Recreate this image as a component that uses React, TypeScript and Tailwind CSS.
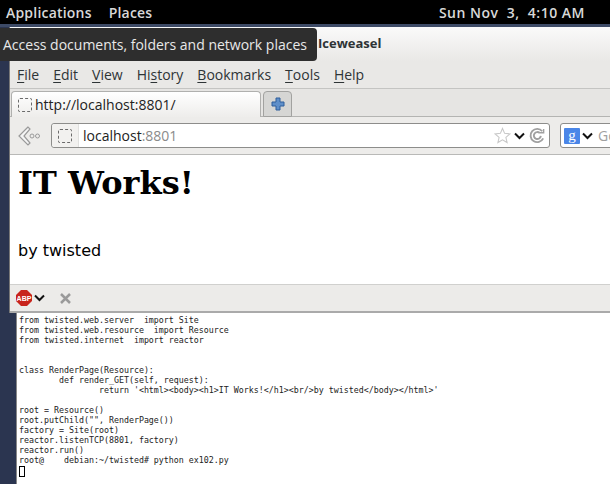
import React from "react";

const ui = "font-['Open_Sans','Noto_Sans',sans-serif]";

const termLines = [
  "from twisted.web.server  import Site",
  "from twisted.web.resource  import Resource",
  "from twisted.internet  import reactor",
  "",
  "",
  "class RenderPage(Resource):",
  "        def render_GET(self, request):",
  "                return '<html><body><h1>IT Works!</h1><br/>by twisted</body></html>'",
  "",
  "root = Resource()",
  'root.putChild("", RenderPage())',
  "factory = Site(root)",
  "reactor.listenTCP(8801, factory)",
  "reactor.run()",
  "root@    debian:~/twisted# python ex102.py",
];

const Favicon = ({ className }: { className: string }) => (
  <div className={`${className} shrink-0 rounded-[2px] border border-dashed border-[#6b6b6b]`} />
);

const Menu = ({ first, rest }: { first: string; rest: string }) => (
  <span>
    <span className="underline underline-offset-2">{first}</span>
    {rest}
  </span>
);

const App: React.FC = () => {
  return (
    <div className={`w-[610px] h-[484px] overflow-hidden flex flex-col bg-[#2b3550] relative ${ui}`}>
      {/* gnome panel */}
      <div className="h-6 shrink-0 bg-black text-[#d8d8d8] text-[14px] font-semibold flex items-center pl-[6px] tracking-[0.2px]">
        <span>Applications</span>
        <span className="ml-[17px]">Places</span>
        <span className="ml-auto mr-[25px] whitespace-pre tracking-[0.5px]">Sun Nov  3,  4:10 AM</span>
      </div>
      <div className="h-[3px] shrink-0 bg-[#3d4a66]" />

      {/* browser */}
      <div className="ml-[9px] shrink-0 flex flex-col border-l border-[#777] bg-[#e8e7e5]">
        <div className="h-[34px] flex items-center bg-gradient-to-b from-[#fafafa] to-[#e9e8e6] pl-[308px] pr-2 text-[13px] font-bold text-[#2e3436]">
          Iceweasel
        </div>
        <div className="h-[28px] flex items-center gap-[14px] pl-[7px] text-[14px] text-[#2e3436] border-b border-[#c4c4c2] bg-[#e9e8e6]">
          <Menu first="F" rest="ile" />
          <Menu first="E" rest="dit" />
          <Menu first="V" rest="iew" />
          <span>
            Hi<span className="underline underline-offset-2">s</span>tory
          </span>
          <Menu first="B" rest="ookmarks" />
          <Menu first="T" rest="ools" />
          <Menu first="H" rest="elp" />
        </div>
        {/* tabs */}
        <div className="h-[28px] flex items-end pl-[1px] border-b border-[#b4b4b2] bg-[#e6e5e3]">
          <div className="h-[26px] w-[250px] -mb-px flex items-center gap-[3px] pl-[6px] rounded-t-[4px] border border-b-0 border-[#b0b0ae] bg-gradient-to-b from-white to-[#eeedeb] text-[14px] text-[#222]">
            <Favicon className="w-[14px] h-[14px]" />
            http://localhost:8801/
          </div>
          <div className="h-[26px] w-[29px] ml-[2px] -mb-px flex items-center justify-center rounded-t-[4px] border border-[#a2a2a0] bg-[#d6d6d4]">
            <svg width="14" height="14" viewBox="0 0 14 14">
              <path d="M5 1h4v4h4v4H9v4H5V9H1V5h4z" fill="#5f8fc9" stroke="#2f5f9c" strokeWidth="1" />
            </svg>
          </div>
        </div>
        {/* nav bar */}
        <div className="h-[38px] flex items-center pl-[7px] border-b border-[#b9b9b7] bg-[#edecea]">
          <svg width="24" height="24" viewBox="0 0 24 24" className="shrink-0" fill="none">
            <path d="M11 3 2 12l9 9 2-2-6-7 6-7z" fill="#f5f5f5" stroke="#9a9a9a" strokeWidth="1.2" />
            <circle cx="15" cy="12" r="2" stroke="#9a9a9a" />
            <circle cx="20.5" cy="12" r="2" stroke="#9a9a9a" />
          </svg>
          <div className="ml-[10px] h-[25px] flex-1 flex items-center rounded-[3px] border border-[#8d8d8b] bg-white min-w-0">
            <div className="h-full w-[27px] flex items-center justify-center bg-[#f2f1ef] border-r border-[#e0e0de] rounded-l-[3px]">
              <Favicon className="w-[14px] h-[14px]" />
            </div>
            <span className="ml-[4px] text-[14px] text-[#222]">
              localhost<span className="text-[#8a8a8a]">:8801</span>
            </span>
            <svg width="17" height="17" viewBox="0 0 24 24" className="ml-auto" fill="#fff" stroke="#c8c8c8" strokeWidth="1.5">
              <path d="m12 2 3 7 7.500.7-5.700 5 1.700 7.300L12 18.200 5.500 22l1.700-7.300-5.700-5L9 9z" />
            </svg>
            <svg width="11" height="8" viewBox="0 0 11 8" className="ml-[3px]" fill="none" stroke="#111" strokeWidth="2">
              <path d="m1 1.500 4.500 4.500L10 1.500" />
            </svg>
            <svg width="17" height="17" viewBox="0 0 18 18" className="ml-[4px] mr-[3px]" fill="none" stroke="#a0a0a0" strokeWidth="2">
              <path d="M15 12a7 7 0 1 1-1-7.500" />
              <path d="M12.500 9.500a3.700 3.700 0 1 1-1-3" />
              <path d="M15.500 2v4h-4" strokeWidth="1.500" />
            </svg>
          </div>
          <div className="ml-[10px] h-[25px] w-[60px] -mr-[10px] shrink-0 flex items-center pl-[3px] rounded-l-[3px] border border-[#8d8d8b] bg-white overflow-hidden">
            <div className="w-4 h-4 bg-[#4a86e8] rounded-[1px] flex items-center justify-center text-white text-[15px] leading-none font-['Liberation_Serif',serif]">
              g
            </div>
            <svg width="11" height="8" viewBox="0 0 11 8" className="ml-[2px] shrink-0" fill="none" stroke="#111" strokeWidth="2">
              <path d="m1 1.500 4.500 4.500L10 1.500" />
            </svg>
            <span className="ml-[5px] text-[14px] text-[#a0a0a0]">Go</span>
          </div>
        </div>
        {/* page */}
        <div className="h-[129px] bg-white pl-2 text-black">
          <h1 className="pt-[7px] text-[32px] leading-[42px] font-bold font-['DejaVu_Serif',serif]">IT Works!</h1>
          <p className="mt-[37px] text-[16px] leading-5 font-['DejaVu_Sans',sans-serif]">by twisted</p>
        </div>
        {/* addon bar */}
        <div className="h-[29px] flex items-center pl-[6px] border-t border-[#d0d0ce] border-b-2 border-b-[#aaa] bg-[#ecebe9]">
          <svg width="16" height="16" viewBox="0 0 16 16" className="shrink-0">
            <path d="M5 0h6l5 5v6l-5 5H5l-5-5V5z" fill="#c8241c" />
            <text x="8" y="11" textAnchor="middle" fontSize="7" fontWeight="700" fill="#fff" fontFamily="Liberation Sans, sans-serif">ABP</text>
          </svg>
          <svg width="11" height="8" viewBox="0 0 11 8" className="ml-[2px]" fill="none" stroke="#111" strokeWidth="2">
            <path d="m1 1.500 4.500 4.500L10 1.500" />
          </svg>
          <svg width="11" height="11" viewBox="0 0 11 11" className="ml-[15px]" fill="none" stroke="#9a9a9a" strokeWidth="2.500">
            <path d="m1 1 9 9M10 1l-9 9" />
          </svg>
        </div>
      </div>

      {/* terminal */}
      <div className="ml-4 flex-1 min-h-0 bg-white border-l border-[#888] pl-[2px] pt-[2px] text-[#222] text-[8.300px] leading-[10px] font-['DejaVu_Sans_Mono',monospace] whitespace-pre">
        {termLines.map((line, i) => (
          <div key={i} className="h-[10px]">
            {line}
          </div>
        ))}
        <div className="mt-[1px] w-[6px] h-[11px] border border-black" />
      </div>

      {/* tooltip */}
      <div className="absolute left-0 top-[28px] w-[317px] h-[33px] flex items-center pl-[3px] rounded-r-[4px] bg-[#2e2e2e] text-[#e8e8e8] text-[14px] whitespace-nowrap">
        Access documents, folders and network places
      </div>
    </div>
  );
};

export default App;
